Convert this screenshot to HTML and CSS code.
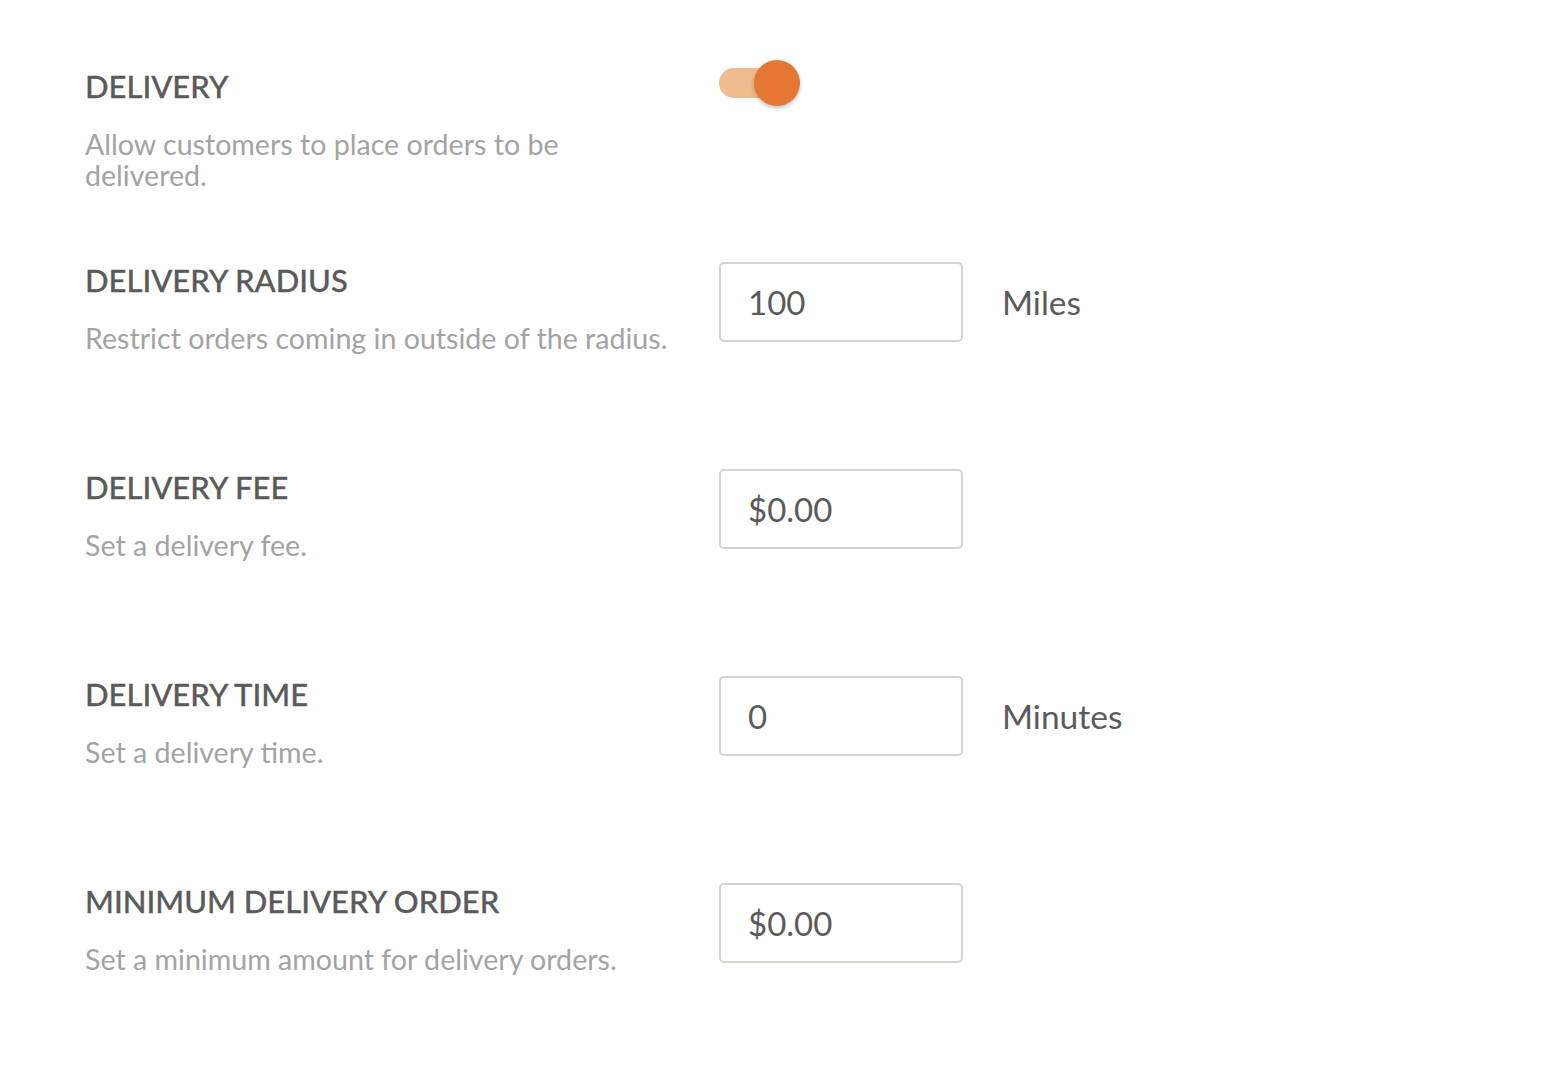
FILE: index.html
```html
<!DOCTYPE html>
<html lang="en">
<head>
    <meta charset="UTF-8">
    <meta name="viewport" content="width=device-width, initial-scale=1.0">
    <title>Delivery Settings</title>
    <link rel="stylesheet" href="styles.css">
</head>
<body>
    <div class="settings">
        <!-- Delivery on/off -->
        <div class="setting setting-toggle">
            <div class="setting-info">
                <h3>DELIVERY</h3>
                <p>Allow customers to place orders to be delivered.</p>
            </div>
            <div class="setting-control">
                <label class="switch">
                    <input type="checkbox" checked>
                    <span class="track"></span>
                    <span class="thumb"></span>
                </label>
            </div>
        </div>

        <div class="setting">
            <div class="setting-info">
                <h3>DELIVERY RADIUS</h3>
                <p>Restrict orders coming in outside of the radius.</p>
            </div>
            <div class="setting-control">
                <input class="field" type="text" value="100">
                <span class="unit">Miles</span>
            </div>
        </div>

        <div class="setting">
            <div class="setting-info">
                <h3>DELIVERY FEE</h3>
                <p>Set a delivery fee.</p>
            </div>
            <div class="setting-control">
                <input class="field" type="text" value="$0.00">
            </div>
        </div>

        <div class="setting">
            <div class="setting-info">
                <h3>DELIVERY TIME</h3>
                <p>Set a delivery time.</p>
            </div>
            <div class="setting-control">
                <input class="field" type="text" value="0">
                <span class="unit">Minutes</span>
            </div>
        </div>

        <div class="setting">
            <div class="setting-info">
                <h3>MINIMUM DELIVERY ORDER</h3>
                <p>Set a minimum amount for delivery orders.</p>
            </div>
            <div class="setting-control">
                <input class="field" type="text" value="$0.00">
            </div>
        </div>
    </div>
</body>
</html>
```

FILE: styles.css
```css
body {
    font-family: 'Lato', sans-serif;
    background-color: #ffffff;
    color: #5a5a5a;
    margin: 0;
    padding: 0;
}

.settings {
    padding: 68px 0 0 85px;
}

.setting {
    display: flex;
    align-items: flex-start;
    min-height: 207px;
}

.setting-toggle {
    min-height: 194px;
}

.setting-info {
    width: 634px;
}

.setting-info h3 {
    font-size: 31px;
    line-height: 36px;
    font-weight: 500;
    color: #5a5a5a;
    margin: 0;
    -webkit-text-stroke: 0.3px #5a5a5a;
}

.setting-info p {
    font-size: 28.6px;
    line-height: 31px;
    color: #a3a3a3;
    margin: 25px 0 0;
    max-width: 592px;
}

.setting-control {
    display: flex;
    align-items: center;
}

.field {
    width: 244px;
    height: 80px;
    box-sizing: border-box;
    border: 2px solid #d6d2ce;
    border-radius: 5px;
    padding: 0 27px;
    font-family: 'Lato', sans-serif;
    font-size: 33px;
    color: #5a5a5a;
    background-color: #ffffff;
    outline: none;
}

.unit {
    margin-left: 39px;
    font-size: 33.5px;
    color: #5a5a5a;
}

.switch {
    position: relative;
    display: block;
    width: 84px;
    height: 48px;
    cursor: pointer;
}

.switch input {
    display: none;
}

.switch .track {
    position: absolute;
    left: 0;
    top: 0;
    width: 72px;
    height: 30px;
    border-radius: 15px;
    background-color: #f0bb8e;
}

.switch .thumb {
    position: absolute;
    left: 35px;
    top: -8px;
    width: 46px;
    height: 46px;
    border-radius: 50%;
    background-color: #e37733;
    box-shadow: 0 2px 4px rgba(0, 0, 0, 0.25);
}
```
